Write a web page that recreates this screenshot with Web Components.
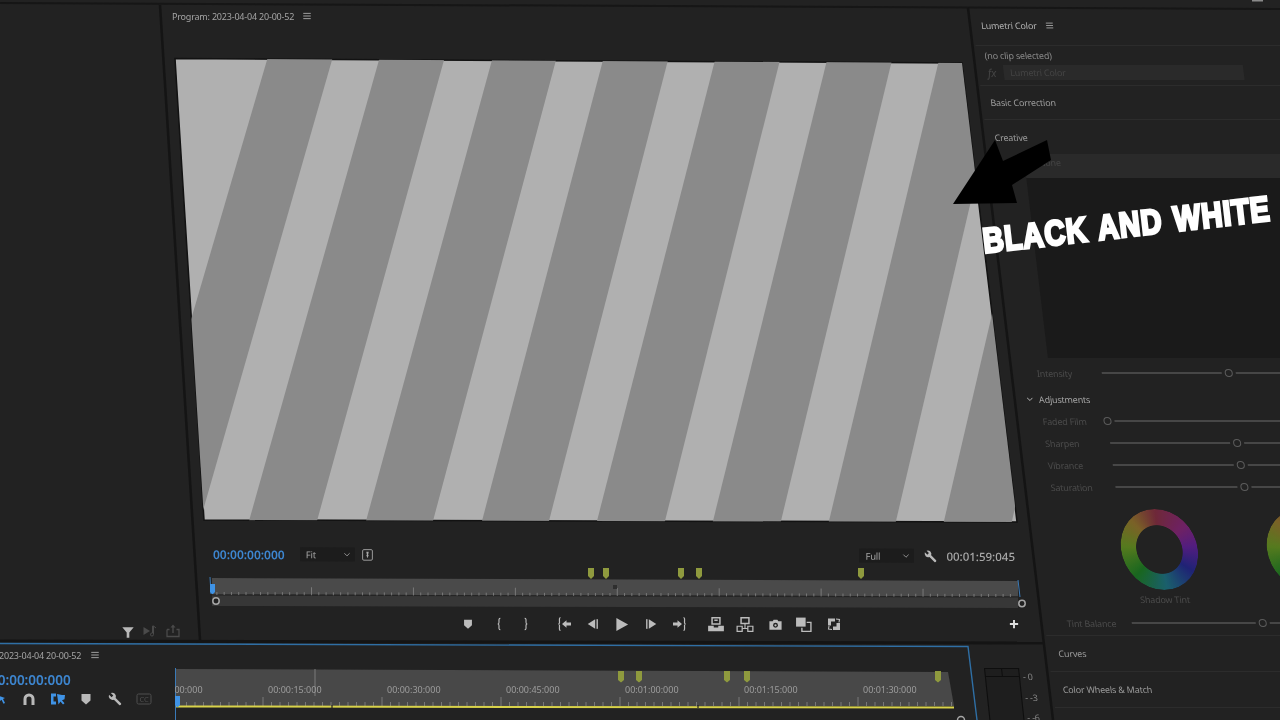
<!DOCTYPE html>
<html>
<head>
<meta charset="utf-8">
<style>
  html, body { margin: 0; background: #222; }
</style>
</head>
<body>
<pr-workspace>
  <pr-media slot="media"></pr-media>
  <pr-program slot="program"></pr-program>
  <pr-lumetri slot="lumetri"></pr-lumetri>
  <pr-timeline slot="timeline"></pr-timeline>
  <pr-meter slot="meter"></pr-meter>
  <pr-caption slot="caption">BLACK AND WHITE</pr-caption>
</pr-workspace>

<script>
const icons = {
    menu: `<path d="M3 4.500h10M3 8h10M3 11.500h10" stroke="currentColor" stroke-width="1.100" fill="none"/>`,
    chevron: `<path d="M4.500 6.500L8 10l3.500-3.500" stroke="currentColor" stroke-width="1.200" fill="none"/>`,
    marker: `<path d="M3.500 3h9v6.500L8 13.500 3.500 9.500z" fill="currentColor"/>`,
    markin: `<path d="M9.500 1.500C7.500 1.500 8 3.500 8 6c0 1.500-.5 2-1.500 2 1 0 1.500.5 1.500 2 0 2.500-.5 4.500 1.500 4.500" stroke="currentColor" stroke-width="1.300" fill="none"/>`,
    markout: `<path d="M6.500 1.500C8.500 1.500 8 3.500 8 6c0 1.500.5 2 1.500 2-1 0-1.500.5-1.500 2 0 2.500.5 4.500-1.500 4.500" stroke="currentColor" stroke-width="1.300" fill="none"/>`,
    gotoin: `<path d="M4.500 1.500C3 1.500 3.500 4 3.500 6.500c0 1-.5 1.500-1.200 1.500.7 0 1.200.5 1.200 1.500 0 2.500-.5 5 1 5" stroke="currentColor" stroke-width="1.200" fill="none"/><path d="M6 8l4.500-3.800V6.500H15v3h-4.500v2.300z" fill="currentColor"/>`,
    gotoout: `<path d="M11.500 1.500c1.500 0 1 2.500 1 5 0 1 .5 1.500 1.200 1.500-.7 0-1.200.5-1.200 1.500 0 2.500.5 5-1 5" stroke="currentColor" stroke-width="1.200" fill="none"/><path d="M10 8L5.500 4.200V6.500H1v3h4.500v2.300z" fill="currentColor"/>`,
    stepback: `<path d="M10.500 2.500v11L2 8z" fill="currentColor"/><rect x="12" y="2.500" width="1.600" height="11" fill="currentColor"/>`,
    stepfwd: `<path d="M5.500 2.500v11L14 8z" fill="currentColor"/><rect x="2.400" y="2.500" width="1.600" height="11" fill="currentColor"/>`,
    play: `<path d="M2.500 1v14L15 8z" fill="currentColor"/>`,
    lift: `<path d="M1 9.500h5v1.500h4V9.500h5V14.500H1z" fill="currentColor"/><path d="M4.500 2.500h7v5.500h-7z" stroke="currentColor" stroke-width="1.300" fill="none"/><rect x="6.500" y="4" width="3" height="1.300" fill="currentColor"/>`,
    extract: `<path d="M1 10h4.500v4.500H1zM10.500 10H15v4.500h-4.500z" stroke="currentColor" stroke-width="1.100" fill="none"/><path d="M4.500 2.500h7v5h-7z" stroke="currentColor" stroke-width="1.300" fill="none"/><path d="M5.500 12h5M8 7.500v4.500" stroke="currentColor" fill="none"/>`,
    camera: `<path d="M1.500 4.500h3.500l1-1.500h4l1 1.500h3.500v9h-13z" fill="currentColor"/><circle cx="8" cy="8.800" r="2.600" fill="#222"/><circle cx="8" cy="8.800" r="1.200" fill="currentColor"/>`,
    compare: `<rect x="1" y="1.500" width="9" height="8.500" fill="currentColor"/><path d="M11 6h4v8.500H6.500V11" stroke="currentColor" stroke-width="1.300" fill="none"/>`,
    swap: `<path d="M2 2.500h7v3H5v4H2z" fill="currentColor"/><path d="M7 14h7V7h-3.500v3.500H7z" fill="currentColor"/><path d="M10 3l3.500.5-.5 3M6 13.500l-3.500-.5.5-3" stroke="currentColor" stroke-width="1.100" fill="none"/>`,
    plus: `<path d="M8 2.500v11M2.500 8h11" stroke="currentColor" stroke-width="2.600" fill="none"/>`,
    filter: `<path d="M1.500 2.500h13L9.500 8.500v6h-3v-6z" fill="currentColor"/>`,
    audio: `<path d="M1.500 4v8L8 8z" fill="currentColor"/><path d="M11.500 3v8.500a1.500 1.500 0 1 1-1-1.400V3zM11.500 3l2.500 2" stroke="currentColor" fill="none"/>`,
    share: `<path d="M2 6.500v7h12v-7h-2.500M2 6.500h2.500" stroke="currentColor" stroke-width="1.300" fill="none"/><path d="M7.300 10V4.500H5.500L8 1.500l2.500 3H8.700V10z" fill="currentColor"/>`,
    wrench: `<g transform="translate(16 0) scale(-1 1)"><path d="M14 3.800l-2.600 2.500-1.700-1.700L12.200 2A3.800 3.800 0 0 0 7.300 6.900L2 12.200A1.300 1.300 0 0 0 3.800 14l5.300-5.300A3.800 3.800 0 0 0 14 3.800z" fill="currentColor"/></g>`,
    magnet: `<path d="M2.500 14V8a5.500 5.500 0 0 1 11 0v6h-3V8a2.500 2.500 0 0 0-5 0v6z" fill="currentColor"/>`,
    linked: `<path d="M1 2.500h5v3H3.500v5H6v3H1zM15 4h-3L7 3l1.500 10.500 2-3 2.500 3 1.500-1.200-2.500-3 2.500-1z" fill="currentColor"/>`,
    ripple: `<path d="M1 3h3v4H1zM1 10h3v4H1zM7 5l6 2-2 1 2 4-1.500.7-2-4L8 10z" fill="currentColor"/>`,
    cc: `<rect x="1" y="3" width="14" height="10" rx="1.500" stroke="currentColor" fill="none"/><text x="8" y="10.500" text-anchor="middle" font-family="Noto Sans" font-size="7.500" fill="currentColor">CC</text>`,
    safe: `<rect x="2" y="1.500" width="12" height="13" rx="1.500" stroke="currentColor" stroke-width="1.100" fill="none"/><path d="M6.500 4h3L8.700 8H9.500L8 12 6.500 8h.8z" fill="currentColor"/>`
};

class PrIcon extends HTMLElement {
    constructor() {
        super();
        const size = this.getAttribute("size") || 16;
        const shadow = this.attachShadow({ mode: "open" });
        shadow.innerHTML = `
            <style>
                :host { display: inline-flex; flex: none; color: #b9b9b9; }
                svg { display: block; }
            </style>
            <svg width="${size}" height="${size}" viewBox="0 0 16 16">${icons[this.getAttribute("name")]}</svg>
        `;
    }
}
customElements.define("pr-icon", PrIcon);

class PrWorkspace extends HTMLElement {
    constructor() {
        super();
        const shadow = this.attachShadow({ mode: "open" });
        shadow.innerHTML = `
            <style>
                :host {
                    display: grid;
                    position: relative;
                    width: 1280px;
                    height: 720px;
                    overflow: hidden;
                    grid-template-columns: 160px 810px 80px 230px;
                    grid-template-rows: 640px 80px;
                    background: #222222;
                    font-family: "Noto Sans", "Open Sans", sans-serif;
                    letter-spacing: -0.2px;
                    filter: blur(0.45px);
                }
                ::slotted([slot=media]) { grid-area: 1 / 1; }
                ::slotted([slot=lumetri]) { grid-area: 1 / 3 / 3 / 5; }
                ::slotted([slot=program]) { grid-area: 1 / 2 / 2 / 4; }
                ::slotted([slot=timeline]) { grid-area: 2 / 1 / 3 / 3; }
                ::slotted([slot=meter]) { grid-area: 2 / 3; }
                .frame { position: absolute; left: 0; top: 0; }
            </style>
            <slot name="media"></slot>
            <slot name="lumetri"></slot>
            <slot name="program"></slot>
            <slot name="timeline"></slot>
            <slot name="meter"></slot>
            <svg class="frame" width="1280" height="720" viewBox="0 0 1280 720" fill="none">
                <path d="M0 3L1280 9" stroke="#161616" stroke-width="2"/>
                <rect x="1252" y="0" width="11" height="1.500" fill="#8a8a8a"/>
                <path d="M160 5L200 640" stroke="#141414" stroke-width="2.500"/>
                <path d="M968 8L1053 720" stroke="#141414" stroke-width="2.500"/>
                <path d="M0 641L1045 643" stroke="#141414" stroke-width="3"/>
                <path d="M0 643.500L968 646.500L977 720" stroke="#2f6fa5" stroke-width="1.400"/>
                <path d="M953 204L995 140L1003 161L1047 140L1051 160L1012 185L1017 203z" fill="#000"/>
            </svg>
            <slot name="caption"></slot>
        `;
    }
}
customElements.define("pr-workspace", PrWorkspace);

class PrMedia extends HTMLElement {
    constructor() {
        super();
        const shadow = this.attachShadow({ mode: "open" });
        shadow.innerHTML = `
            <style>
                :host {
                    display: flex;
                    align-items: flex-end;
                    justify-content: flex-end;
                    gap: 7px;
                    padding-bottom: 1px;
                }
                .dim { color: #4a4a4a; }
                pr-icon:first-child { color: #c4c4c4; }
                pr-icon:last-child { margin-right: -21px; }
            </style>
            <pr-icon name="filter" size="14"></pr-icon>
            <pr-icon class="dim" name="audio"></pr-icon>
            <pr-icon class="dim" name="share"></pr-icon>
        `;
    }
}
customElements.define("pr-media", PrMedia);

class PrDropdown extends HTMLElement {
    constructor() {
        super();
        const shadow = this.attachShadow({ mode: "open" });
        shadow.innerHTML = `
            <style>
                :host {
                    display: inline-flex;
                    align-items: center;
                    justify-content: space-between;
                    box-sizing: border-box;
                    width: 55px;
                    height: 14px;
                    padding: 0 2px 0 6px;
                    background: #1c1c1c;
                    font-size: 9.500px;
                    color: #a4a4a4;
                }
                pr-icon { color: #999; }
            </style>
            <slot></slot>
            <pr-icon name="chevron" size="12"></pr-icon>
        `;
    }
}
customElements.define("pr-dropdown", PrDropdown);

class PrProgram extends HTMLElement {
    videoStripes() {
        // top and bottom crossing of each dark band, read at y 60 and y 521
        const bands = [
            [267, 332, 132, 200], [379, 444, 249, 317], [492, 556, 366, 433], [603, 668, 482, 549],
            [715, 780, 597, 665], [827, 892, 713, 781], [939, 1004, 829, 896], [1051, 1116, 944, 1012]
        ];
        const at = (a, b, y) => a + (b - a) * (y - 60) / 461;
        return bands.map(([a, b, c, d]) =>
            `<polygon fill="#8a8a8a" points="${at(a, c, 40)},40 ${at(b, d, 40)},40 ${at(b, d, 530)},530 ${at(a, c, 530)},530"/>`
        ).join("");
    }

    rulerTicks() {
        let out = "";
        for (let i = 1; i * 7.28 < 808; i++) {
            const x = 209.600 + i * 7.28;
            const base = 595 + (x - 212) * 0.0025;
            const h = i % 14 === 0 ? 8 : 3;
            out += `<path d="M${x} ${base}v-${h}" stroke="#858585" stroke-width="0.8"/>`;
        }
        return out;
    }

    rulerMarkers() {
        return [591, 606, 681, 699, 861].map(x =>
            `<path d="M${x - 3} 568h6v8l-3 3-3-3z" fill="#8f9a3e"/>`
        ).join("");
    }

    constructor() {
        super();
        const shadow = this.attachShadow({ mode: "open" });
        shadow.innerHTML = `
            <style>
                :host {
                    display: flex;
                    flex-direction: column;
                    color: #a8a8a8;
                    font-size: 9px;
                }
                .title {
                    display: flex;
                    align-items: center;
                    gap: 7px;
                    height: 32px;
                    margin-bottom: 8px;
                    padding-left: 12px;
                    color: #a4a4a4;
                }
                svg { display: block; flex: none; }
                .video { height: 490px; }
                .controls {
                    display: flex;
                    align-items: center;
                    height: 20px;
                    margin-top: 15px;
                    padding: 0 35px 0 53px;
                    transform: rotate(0.14deg);
                }
                .tc-blue { color: #3d86d0; font-size: 12px; font-weight: 600; letter-spacing: 0; margin-right: 15px; }
                .tc-grey { color: #a8a8a8; font-size: 11.500px; font-weight: 500; letter-spacing: 0; margin-left: 8px; }
                .safe { margin-left: 6px; color: #a8a8a8; }
                .grow { flex: 1; }
                .transport {
                    display: flex;
                    align-items: center;
                    height: 24px;
                    padding: 0 30px 0 301px;
                }
                .transport pr-icon { color: #bcbcbc; }
                .transport .plus { margin-left: auto; color: #dddddd; }
            </style>
            <div class="title">Program: 2023-04-04 20-00-52 <pr-icon name="menu" size="12"></pr-icon></div>
            <svg class="video" width="890" height="490" viewBox="160 40 890 490">
                <defs><clipPath id="screen"><polygon points="175,58.500 962,63 1017,522 204,520"/></clipPath></defs>
                <polygon points="175,58.500 962,63 1017,522 204,520" fill="#b0b0b0" stroke="#121212" stroke-width="1.500"/>
                <g clip-path="url(#screen)">${this.videoStripes()}</g>
            </svg>
            <div class="controls">
                <span class="tc-blue">00:00:00:000</span>
                <pr-dropdown>Fit</pr-dropdown>
                <pr-icon class="safe" name="safe" size="13"></pr-icon>
                <span class="grow"></span>
                <pr-dropdown>Full</pr-dropdown>
                <pr-icon name="wrench" size="15" style="margin-left:9px"></pr-icon>
                <span class="tc-grey">00:01:59:045</span>
            </div>
            <svg width="890" height="47" viewBox="160 565 890 47">
                <polygon points="212,578 1018,581 1018,596.500 212,594.500" fill="#4a4a4a"/>
                <polygon points="212,594.500 1018,596.500 1018,608 212,606" fill="#373737"/>
                <path d="M212 595L1018 597" stroke="#242424" stroke-width="1.200"/>
                ${this.rulerTicks()}
                <rect x="613" y="585" width="4" height="4" fill="#2e2e2e"/>
                ${this.rulerMarkers()}
                <path d="M210 577L211 594M1018 580L1020 597" stroke="#3a7ab8"/>
                <path d="M210 584h5v8l-2 2h-1l-2-2z" fill="#3f93e6"/>
                <circle cx="216" cy="601" r="3.200" fill="#222" stroke="#a6a6a6" stroke-width="1.500"/>
                <circle cx="1022" cy="603.500" r="3.200" fill="#222" stroke="#a6a6a6" stroke-width="1.500"/>
            </svg>
            <div class="transport">
                <pr-icon name="marker" size="14"></pr-icon>
                <pr-icon name="markin" size="14" style="margin-left:17px"></pr-icon>
                <pr-icon name="markout" size="14" style="margin-left:13px"></pr-icon>
                <pr-icon name="gotoin" size="16" style="margin-left:23px"></pr-icon>
                <pr-icon name="stepback" size="14" style="margin-left:14px"></pr-icon>
                <pr-icon name="play" size="15" style="margin-left:13.500px"></pr-icon>
                <pr-icon name="stepfwd" size="14" style="margin-left:15.500px"></pr-icon>
                <pr-icon name="gotoout" size="16" style="margin-left:14px"></pr-icon>
                <pr-icon name="lift" size="18" style="margin-left:19px"></pr-icon>
                <pr-icon name="extract" size="18" style="margin-left:11px"></pr-icon>
                <pr-icon name="camera" size="15" style="margin-left:13.500px"></pr-icon>
                <pr-icon name="compare" size="17" style="margin-left:12px"></pr-icon>
                <pr-icon name="swap" size="16" style="margin-left:14.500px"></pr-icon>
                <pr-icon class="plus" name="plus" size="12"></pr-icon>
            </div>
        `;
    }
}
customElements.define("pr-program", PrProgram);

class PrSlider extends HTMLElement {
    constructor() {
        super();
        const knob = Number(this.getAttribute("knob"));
        const shadow = this.attachShadow({ mode: "open" });
        shadow.innerHTML = `
            <style>
                :host {
                    display: flex;
                    align-items: center;
                    height: 22px;
                    padding-left: 22px;
                    font-size: 9px;
                    color: #4b4b4b;
                }
                .label { width: 65px; flex: none; }
                .track { flex: 1; display: flex; align-items: center; }
                .bar { height: 1.500px; background: #474747; }
                .grow { flex: 1; }
                .knob {
                    box-sizing: border-box;
                    flex: none;
                    width: 8px;
                    height: 8px;
                    margin: 0 3px;
                    border: 1.500px solid #5c5c5c;
                    border-radius: 50%;
                }
            </style>
            <span class="label"><slot></slot></span>
            <span class="track">
                <span class="bar" style="width:${Math.max(knob, 0)}px;margin-left:${Math.min(knob, 0)}px"></span>
                <span class="knob"></span>
                <span class="bar grow"></span>
            </span>
        `;
    }
}
customElements.define("pr-slider", PrSlider);

class PrWheel extends HTMLElement {
    constructor() {
        super();
        const shadow = this.attachShadow({ mode: "open" });
        shadow.innerHTML = `
            <style>
                :host {
                    display: flex;
                    flex-direction: column;
                    align-items: center;
                    flex: none;
                    width: 110px;
                    font-size: 9px;
                    color: #4b4b4b;
                }
                .ring {
                    width: 77px;
                    height: 81px;
                    border-radius: 50%;
                    opacity: 0.85;
                    background: conic-gradient(#7c2a3c, #7c2170 50deg, #5a1d90 85deg, #1f2384 125deg, #196a7a 175deg, #18731f 225deg, #5f8a1e 275deg, #8a6d28 320deg, #7c2a3c);
                    -webkit-mask: radial-gradient(closest-side, transparent 59%, #000 61%);
                    mask: radial-gradient(closest-side, transparent 59%, #000 61%);
                }
                .label { margin-top: 3px; height: 13px; line-height: 13px; }
            </style>
            <div class="ring"></div>
            <div class="label"><slot></slot></div>
        `;
    }
}
customElements.define("pr-wheel", PrWheel);

class PrLumetri extends HTMLElement {
    constructor() {
        super();
        const shadow = this.attachShadow({ mode: "open" });
        shadow.innerHTML = `
            <style>
                :host {
                    display: block;
                    width: 460px;
                    height: 720px;
                    transform: skewX(6.84deg);
                    transform-origin: 0 0;
                    font-size: 9px;
                    color: #9c9c9c;
                }
                .row {
                    box-sizing: border-box;
                    display: flex;
                    align-items: center;
                    padding-left: 8px;
                    border-bottom: 1px solid #2c2c2c;
                }
                .title { height: 46px; padding-top: 6px; gap: 8px; color: #b0b0b0; }
                .clip { display: block; height: 40px; padding-top: 3px; color: #8a8a8a; line-height: 14px; }
                .fx { display: flex; align-items: center; gap: 8px; margin: 2px 0 0 1px; color: #444; font-size: 11px; font-style: italic; }
                .fx-select {
                    box-sizing: border-box;
                    width: 240px;
                    height: 15px;
                    line-height: 15px;
                    padding-left: 6px;
                    background: #2a2a2a;
                    font-size: 9px;
                    font-style: normal;
                    color: #444;
                }
                .basic { height: 34px; }
                .creative { height: 34px; border: 0; }
                .none {
                    box-sizing: border-box;
                    height: 24px;
                    margin-left: 35px;
                    padding: 2px 0 0 14px;
                    line-height: 14px;
                    background: #2a2a2a;
                    color: #444;
                }
                .preview { height: 180px; margin: 0 0 4px 35px; background: #1a1a1a; }
                .adjust {
                    display: flex;
                    align-items: center;
                    gap: 3px;
                    height: 22px;
                    margin: 4px 0 0 6px;
                    color: #a4a4a4;
                }
                .wheels {
                    display: flex;
                    gap: 36px;
                    height: 113px;
                    padding: 11px 0 0 68px;
                    box-sizing: border-box;
                }
                .tint { border-bottom: 1px solid #2c2c2c; height: 24px; }
                .foot { height: 36px; color: #9a9a9a; padding-left: 10px; }
            </style>
            <div class="row title">Lumetri Color <pr-icon name="menu" size="11"></pr-icon></div>
            <div class="row clip">(no clip selected)
                <div class="fx">fx <span class="fx-select">Lumetri Color</span></div>
            </div>
            <div class="row basic">Basic Correction</div>
            <div class="row creative">Creative</div>
            <div class="none">None</div>
            <div class="preview"></div>
            <pr-slider knob="120">Intensity</pr-slider>
            <div class="adjust"><pr-icon name="chevron" size="12"></pr-icon>Adjustments</div>
            <pr-slider knob="-7">Faded Film</pr-slider>
            <pr-slider knob="120">Sharpen</pr-slider>
            <pr-slider knob="121">Vibrance</pr-slider>
            <pr-slider knob="122">Saturation</pr-slider>
            <div class="wheels">
                <pr-wheel>Shadow Tint</pr-wheel>
                <pr-wheel></pr-wheel>
            </div>
            <pr-slider class="tint" knob="124">Tint Balance</pr-slider>
            <div class="row foot">Curves</div>
            <div class="row foot">Color Wheels &amp; Match</div>
        `;
    }
}
customElements.define("pr-lumetri", PrLumetri);

class PrTimeline extends HTMLElement {
    ticks() {
        let out = "";
        for (let i = 0; i * 8.5 < 775; i++) {
            const x = 178 + i * 8.5;
            const h = i % 14 === 10 ? 9 : 4;
            out += `<path d="M${x} 706v-${h}" stroke="#858585" stroke-width="0.8"/>`;
        }
        return out;
    }

    markers() {
        return [621, 639, 727, 747, 938].map(x =>
            `<path d="M${x - 3} 671h6v9l-3 2.500-3-2.500z" fill="#8f9a3e"/>`
        ).join("");
    }

    constructor() {
        super();
        const labels = ["00:00:00:000", "00:00:15:000", "00:00:30:000", "00:00:45:000", "00:01:00:000", "00:01:15:000", "00:01:30:000"];
        const shadow = this.attachShadow({ mode: "open" });
        shadow.innerHTML = `
            <style>
                :host {
                    display: grid;
                    grid-template-columns: 175px 795px;
                    overflow: hidden;
                    font-size: 9px;
                    color: #a4a4a4;
                }
                .head { padding-top: 8px; overflow: hidden; }
                .tab { display: flex; align-items: center; gap: 8px; height: 14px; margin-left: -1px; white-space: nowrap; }
                .tc {
                    height: 18px;
                    line-height: 18px;
                    margin: 9px 0 0 -10px;
                    color: #3d86d0;
                    font-size: 13.500px;
                    font-weight: 600;
                    letter-spacing: 0;
                    white-space: nowrap;
                }
                .tools { display: flex; align-items: center; gap: 12.800px; height: 16px; margin: 2px 0 0 -8px; }
                .tools .on { color: #3f93e6; }
                .tools .dim { color: #4e4e4e; }
                .ruler { display: grid; overflow: hidden; padding-top: 20px; }
                .ruler > * { grid-area: 1 / 1; }
                .labels {
                    display: flex;
                    height: 14px;
                    line-height: 14px;
                    margin: 23px 0 0 -26px;
                    letter-spacing: 0;
                    color: #9c9c9c;
                }
                .labels span { flex: none; width: 119px; }
                svg { display: block; }
            </style>
            <div class="head">
                <div class="tab">2023-04-04 20-00-52 <pr-icon name="menu" size="12"></pr-icon></div>
                <div class="tc">00:00:00:000</div>
                <div class="tools">
                    <pr-icon class="on" name="ripple"></pr-icon>
                    <pr-icon name="magnet"></pr-icon>
                    <pr-icon class="on" name="linked"></pr-icon>
                    <pr-icon name="marker" size="16"></pr-icon>
                    <pr-icon name="wrench"></pr-icon>
                    <pr-icon class="dim" name="cc"></pr-icon>
                </div>
            </div>
            <div class="ruler">
                <svg width="795" height="60" viewBox="175 660 795 60">
                    <polygon points="175,669 948,672 954,706 175,706" fill="#484848"/>
                    <path d="M315 669v27" stroke="#7a7a7a"/>
                    ${this.ticks()}
                    <path d="M176 706.500L954 707.500" stroke="#d8d24a" stroke-width="2"/>
                    <path d="M332 705v3M698 705v3" stroke="#222" stroke-width="1.200"/>
                    ${this.markers()}
                    <path d="M175.500 668v52" stroke="#3a7ab8"/>
                    <path d="M175 696h5v9l-2 2h-1l-2-2z" fill="#3f93e6"/>
                    <circle cx="961" cy="720" r="3.500" fill="#222" stroke="#a6a6a6" stroke-width="1.500"/>
                </svg>
                <div class="labels">${labels.map(l => `<span>${l}</span>`).join("")}</div>
            </div>
        `;
    }
}
customElements.define("pr-timeline", PrTimeline);

class PrMeter extends HTMLElement {
    constructor() {
        super();
        const shadow = this.attachShadow({ mode: "open" });
        shadow.innerHTML = `
            <style>
                :host {
                    display: block;
                    padding: 28px 0 0 14px;
                    box-sizing: border-box;
                    font-size: 9px;
                    color: #858585;
                }
                .wrap { display: flex; transform: skewX(6deg); transform-origin: 0 0; }
                .bar { width: 33px; height: 60px; border: 1px solid #0e0e0e; background: #1e1e1e; }
                .top { display: flex; height: 7px; border-bottom: 1px solid #0e0e0e; }
                .top span { flex: 1; }
                .top span + span { border-left: 1px solid #0e0e0e; }
                .scale {
                    display: flex;
                    flex-direction: column;
                    gap: 8.500px;
                    margin: 3px 0 0 3px;
                    line-height: 12px;
                }
            </style>
            <div class="wrap">
                <div class="bar"><div class="top"><span></span><span></span></div></div>
                <div class="scale"><span>- 0</span><span>- -3</span><span>- -6</span></div>
            </div>
        `;
    }
}
customElements.define("pr-meter", PrMeter);

class PrCaption extends HTMLElement {
    constructor() {
        super();
        const shadow = this.attachShadow({ mode: "open" });
        shadow.innerHTML = `
            <style>
                :host {
                    position: absolute;
                    left: 985px;
                    top: 222px;
                    font-family: "Liberation Sans", sans-serif;
                    font-weight: 700;
                    font-size: 35px;
                    line-height: 38px;
                    letter-spacing: 1px;
                    word-spacing: 3px;
                    white-space: nowrap;
                    color: #fff;
                    -webkit-text-stroke: 2.800px #fff;
                    transform: rotate(-6.500deg) scaleX(0.825);
                    transform-origin: 0 100%;
                }
            </style>
            <slot></slot>
        `;
    }
}
customElements.define("pr-caption", PrCaption);
</script>
</body>
</html>
